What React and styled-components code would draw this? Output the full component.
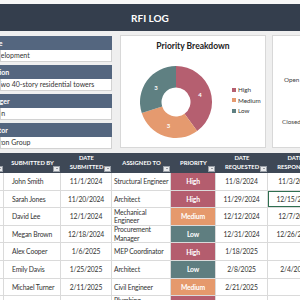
import React from 'react';
import styled, { createGlobalStyle } from 'styled-components';

const GlobalStyle = createGlobalStyle`
  html, body {
    margin: 0;
    padding: 0;
    background: #efefef;
  }
  body {
    font-family: Lato, "Liberation Sans", sans-serif;
  }
`;

const PRIORITY_COLORS = {
  High: '#b45d6e',
  Medium: '#e5996c',
  Low: '#5f7e80',
};

const COLS = '4px 57px 51px 59px 45px 52px 54px';

const Sheet = styled.div`
  width: 300px;
  height: 300px;
  overflow: hidden;
  background: #efefef;
  display: flex;
  flex-direction: column;
`;

const TopStrip = styled.div`
  flex: none;
  height: 4px;
  background: #f7f7f7;
`;

const TitleBar = styled.div`
  flex: none;
  height: 27px;
  background: #343e4d;
  color: #fff;
  display: flex;
  align-items: center;
  justify-content: center;
  font-weight: bold;
  font-size: 10px;
`;

const Dashboard = styled.div`
  flex: none;
  height: 113px;
  margin-top: 4px;
  display: flex;
`;

const FieldList = styled.div`
  width: 112px;
  flex: none;
  padding-top: 1px;
  display: flex;
  flex-direction: column;
  gap: 3px;
`;

const FieldLabel = styled.div`
  height: 14px;
  line-height: 14px;
  background: #54667f;
  color: #fff;
  font-weight: bold;
  font-size: 7px;
  white-space: nowrap;
  overflow: hidden;
  text-indent: ${p => p.$shift}px;
`;

const FieldValue = styled.div`
  box-sizing: border-box;
  height: 12px;
  line-height: 11px;
  background: #fff;
  border: 1px solid #d2d2d2;
  border-top: none;
  color: #333;
  font-size: 7px;
  white-space: nowrap;
  overflow: hidden;
  text-indent: ${p => p.$shift}px;
`;

const ChartPanel = styled.div`
  box-sizing: border-box;
  width: 146px;
  flex: none;
  margin: 0 6px 0 8px;
  background: #fff;
  border: 1px solid #d8d8d8;
  display: flex;
  flex-direction: column;
  align-items: center;
`;

const ChartTitle = styled.div`
  margin-top: 5px;
  height: 10px;
  line-height: 10px;
  font-weight: bold;
  font-size: 8.5px;
  color: #222;
`;

const ChartBody = styled.div`
  margin-top: 14px;
  align-self: stretch;
  padding-left: 18px;
  display: flex;
  align-items: center;
  gap: 19px;
`;

const Legend = styled.div`
  display: flex;
  flex-direction: column;
  margin-bottom: 4px;
`;

const LegendItem = styled.div`
  display: flex;
  align-items: center;
  gap: 2px;
  height: 10.5px;
  font-size: 6.3px;
  color: #333;

  &::before {
    content: '';
    width: 4px;
    height: 4px;
    background: ${p => p.$color};
  }
`;

const StatusPanel = styled.div`
  box-sizing: border-box;
  width: 60px;
  flex: none;
  background: #fff;
  border: 1px solid #d8d8d8;
  padding: 39px 0 0 9px;
  display: flex;
  flex-direction: column;
  gap: 32px;
  font-size: 6.3px;
  color: #444;
`;

const StatusLabel = styled.div`
  height: 10px;
  line-height: 10px;
  padding-left: ${p => p.$indent}px;
`;

const Table = styled.div`
  margin-top: 5px;
  display: flex;
  flex-direction: column;
`;

const HeadRow = styled.div`
  display: grid;
  grid-template-columns: ${COLS};
  height: 20px;
  flex: none;
  background: #3e4856;
  color: #fff;
  font-weight: bold;
  font-size: 5.9px;
  text-transform: uppercase;
`;

const HeadCell = styled.div`
  position: relative;
  display: flex;
  align-items: center;
  justify-content: center;
  text-align: center;
  line-height: 8.6px;
  white-space: nowrap;
`;

const FilterButton = styled.span`
  position: absolute;
  right: 1px;
  bottom: 1.5px;
  box-sizing: border-box;
  width: 7px;
  height: 6px;
  background: #e8e9eb;
  border: 1px solid #9aa0a8;

  &::after {
    content: '';
    position: absolute;
    left: 1.5px;
    top: 1.5px;
    border-left: 1.5px solid transparent;
    border-right: 1.5px solid transparent;
    border-top: 1.5px solid #3e4856;
  }
`;

const BodyRow = styled.div`
  display: grid;
  grid-template-columns: ${COLS};
  box-sizing: border-box;
  height: 17.6px;
  flex: none;
  background: #fff;
  border-bottom: 1px solid #dadada;
  color: #333;
  font-size: 6.8px;
  letter-spacing: -0.15px;
`;

const Cell = styled.div`
  display: flex;
  align-items: center;
  justify-content: ${p => (p.$center ? 'center' : 'flex-start')};
  padding-left: ${p => p.$pad || 0}px;
  border-right: 1px solid #dadada;
  line-height: 8.6px;
  white-space: nowrap;
  overflow: hidden;
  box-shadow: ${p => (p.$selected ? 'inset 0 0 0 1px #2f6f50' : 'none')};
`;

const WrapText = styled.span`
  white-space: normal;
  width: 50px;
`;

const PriorityCell = styled.div`
  display: flex;
  align-items: center;
  justify-content: center;
  background: ${p => PRIORITY_COLORS[p.$level]};
  color: #fff;
  font-weight: bold;
  border-right: 1px solid #dadada;
`;

const fields = [
  { label: 'Project Name', labelShift: -40, value: 'Residential Development', valueShift: -48 },
  { label: 'Description', labelShift: -27, value: 'Two 40-story residential towers', valueShift: -4 },
  { label: 'Project Manager', labelShift: -42, value: 'Jason', valueShift: -13 },
  { label: 'Contractor', labelShift: -26, value: 'Horizon Group', valueShift: -16 },
];

const rows = [
  { name: 'John Smith', submitted: '11/1/2024', assigned: 'Structural Engineer', priority: 'High', requested: '11/8/2024', responded: '11/3/2024' },
  { name: 'Sarah Jones', submitted: '11/20/2024', assigned: 'Architect', priority: 'High', requested: '11/29/2024', responded: '12/15/2024', selected: true },
  { name: 'David Lee', submitted: '12/1/2024', assigned: 'Mechanical Engineer', wrap: true, priority: 'Medium', requested: '12/12/2024', responded: '12/7/2024' },
  { name: 'Megan Brown', submitted: '12/18/2024', assigned: 'Procurement Manager', wrap: true, priority: 'Low', requested: '12/31/2024', responded: '12/26/2024' },
  { name: 'Alex Cooper', submitted: '1/6/2025', assigned: 'MEP Coordinator', priority: 'High', requested: '1/18/2025', responded: '' },
  { name: 'Emily Davis', submitted: '1/25/2025', assigned: 'Architect', priority: 'Low', requested: '2/8/2025', responded: '2/4/2025' },
  { name: 'Michael Turner', submitted: '2/11/2025', assigned: 'Civil Engineer', priority: 'Medium', requested: '2/21/2025', responded: '' },
  { name: 'Chris Martin', submitted: '3/2/2025', assigned: 'Plumbing Engineer', wrap: true, priority: 'High', requested: '3/12/2025', responded: '' },
];

const headers = [
  [''],
  ['Submitted By'],
  ['Date', 'Submitted'],
  ['Assigned To'],
  ['Priority'],
  ['Date', 'Requested'],
  ['Date', 'Responded'],
];

function Donut() {
  return (
    <svg width="74" height="74" viewBox="0 0 74 74">
      <path d="M37 1 A36 36 0 0 1 58.16 66.12 L45.52 48.73 A14.5 14.5 0 0 0 37 22.5 Z" fill="#b55f70" />
      <path d="M58.16 66.12 A36 36 0 0 1 2.76 48.12 L23.21 41.48 A14.5 14.5 0 0 0 45.52 48.73 Z" fill="#e59a6f" />
      <path d="M2.76 48.12 A36 36 0 0 1 37 1 L37 22.5 A14.5 14.5 0 0 0 23.21 41.48 Z" fill="#5f8082" />
      <g fill="#fff" fontSize="6" fontWeight="bold" textAnchor="middle" dominantBaseline="central" fontFamily="Lato, sans-serif">
        <text x="61" y="29.5">4</text>
        <text x="29.5" y="60">3</text>
        <text x="17" y="22.5">3</text>
      </g>
    </svg>
  );
}

export default function App() {
  return (
    <Sheet>
      <GlobalStyle />
      <TopStrip />
      <TitleBar>RFI LOG</TitleBar>
      <Dashboard>
        <FieldList>
          {fields.map(f => (
            <div key={f.label}>
              <FieldLabel $shift={f.labelShift}>{f.label}</FieldLabel>
              <FieldValue $shift={f.valueShift}>{f.value}</FieldValue>
            </div>
          ))}
        </FieldList>
        <ChartPanel>
          <ChartTitle>Priority Breakdown</ChartTitle>
          <ChartBody>
            <Donut />
            <Legend>
              <LegendItem $color="#b55f70">High</LegendItem>
              <LegendItem $color="#e59a6f">Medium</LegendItem>
              <LegendItem $color="#5f8082">Low</LegendItem>
            </Legend>
          </ChartBody>
        </ChartPanel>
        <StatusPanel>
          <StatusLabel $indent={2}>Open</StatusLabel>
          <StatusLabel $indent={0}>Closed</StatusLabel>
        </StatusPanel>
      </Dashboard>
      <Table>
        <HeadRow>
          {headers.map((h, i) => (
            <HeadCell key={i}>
              <span>
                {h.map((line, j) => (
                  <div key={j}>{line}</div>
                ))}
              </span>
              <FilterButton />
            </HeadCell>
          ))}
        </HeadRow>
        {rows.map(r => (
          <BodyRow key={r.name}>
            <Cell />
            <Cell $pad={8}>{r.name}</Cell>
            <Cell $center>{r.submitted}</Cell>
            <Cell $pad={2}>{r.wrap ? <WrapText>{r.assigned}</WrapText> : r.assigned}</Cell>
            <PriorityCell $level={r.priority}>{r.priority}</PriorityCell>
            <Cell $center>{r.requested}</Cell>
            <Cell $center $selected={r.selected}>{r.responded}</Cell>
          </BodyRow>
        ))}
      </Table>
    </Sheet>
  );
}
